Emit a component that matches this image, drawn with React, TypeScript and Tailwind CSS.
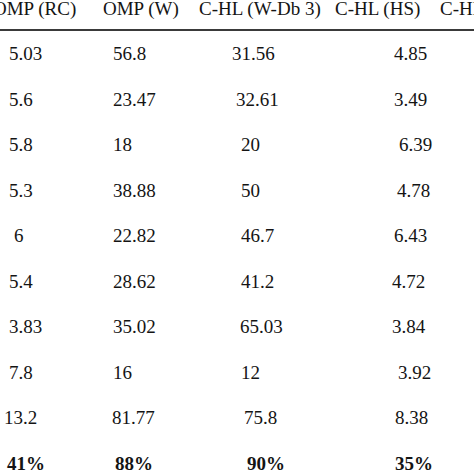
interface Row {
  cells: [string, string][]
  bold?: boolean
}

const header: [string, string][] = [
  ['OMP (RC)', 'ml-[-7px]'],
  ['OMP (W)', 'ml-0'],
  ['C-HL (W-Db 3)', 'ml-0'],
  ['C-HL (HS)', 'ml-0'],
  ['C-HL (RC)', 'ml-0'],
]

// each cell: [value, left offset inside its column]
const rows: Row[] = [
  { cells: [['5.03', 'pl-[9px]'], ['56.8', 'pl-[10px]'], ['31.56', 'pl-[33px]'], ['4.85', 'pl-[59px]']] },
  { cells: [['5.6', 'pl-[9px]'], ['23.47', 'pl-[10px]'], ['32.61', 'pl-[37px]'], ['3.49', 'pl-[59px]']] },
  { cells: [['5.8', 'pl-[9px]'], ['18', 'pl-[10px]'], ['20', 'pl-[42px]'], ['6.39', 'pl-[64px]']] },
  { cells: [['5.3', 'pl-[9px]'], ['38.88', 'pl-[10px]'], ['50', 'pl-[42px]'], ['4.78', 'pl-[62px]']] },
  { cells: [['6', 'pl-[14px]'], ['22.82', 'pl-[10px]'], ['46.7', 'pl-[42px]'], ['6.43', 'pl-[59px]']] },
  { cells: [['5.4', 'pl-[9px]'], ['28.62', 'pl-[10px]'], ['41.2', 'pl-[42px]'], ['4.72', 'pl-[57px]']] },
  { cells: [['3.83', 'pl-[9px]'], ['35.02', 'pl-[10px]'], ['65.03', 'pl-[41px]'], ['3.84', 'pl-[57px]']] },
  { cells: [['7.8', 'pl-[9px]'], ['16', 'pl-[10px]'], ['12', 'pl-[42px]'], ['3.92', 'pl-[63px]']] },
  { cells: [['13.2', 'pl-[4px]'], ['81.77', 'pl-[9px]'], ['75.8', 'pl-[45px]'], ['8.38', 'pl-[60px]']] },
  { cells: [['41%', 'pl-[7px]'], ['88%', 'pl-[12px]'], ['90%', 'pl-[48px]'], ['35%', 'pl-[60px]']], bold: true },
]

const colWidths = ['w-[103px]', 'w-[96px]', 'w-[136px]', 'w-[105px]', 'flex-1']

export default function App() {
  return (
    <div className="w-[474px] h-[474px] overflow-hidden bg-white text-[#141414] text-[19px] font-['Liberation_Serif',_'Times_New_Roman',_serif] whitespace-nowrap">
      {/* Header */}
      <div className="flex h-[31px] leading-[17px] border-b-2 border-[#3a3a3a]">
        {header.map(([label, cls], i) => (
          <div key={i} className={`${colWidths[i]} shrink-0 overflow-visible`}>
            <span className={`block ${cls}`}>{label}</span>
          </div>
        ))}
      </div>

      {/* Body */}
      {rows.map((row, r) => (
        <div
          key={r}
          className={`flex h-[45.5px] leading-[45.5px] ${row.bold ? 'font-bold' : 'font-normal'}`}
        >
          {row.cells.map(([value, cls], i) => (
            <div key={i} className={`${colWidths[i]} shrink-0 ${cls}`}>
              {value}
            </div>
          ))}
          <div className="flex-1" />
        </div>
      ))}
    </div>
  )
}
